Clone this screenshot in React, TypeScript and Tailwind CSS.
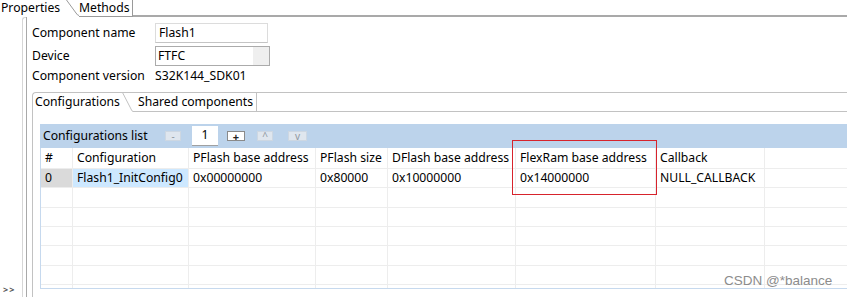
import React from "react";

const columns = [
  { width: "w-[32px]", head: "#", value: "0", cell: "bg-[#dadada]" },
  { width: "w-[116px]", head: "Configuration", value: "Flash1_InitConfig0", cell: "bg-[#cde8ff]" },
  { width: "w-[127px]", head: "PFlash base address", value: "0x00000000", cell: "" },
  { width: "w-[72px]", head: "PFlash size", value: "0x80000", cell: "" },
  { width: "w-[128px]", head: "DFlash base address", value: "0x10000000", cell: "" },
  { width: "w-[140px]", head: "FlexRam base address", value: "0x14000000", cell: "" },
  { width: "w-[109px]", head: "Callback", value: "NULL_CALLBACK", cell: "" }
];

// heights of the empty rows below the data row
const emptyRows = ["h-[20px]", "h-[19px]", "h-[19px]", "h-[20px]", "h-[19px]"];

function TopTabs() {
  return (
    <div className="flex h-[17px] leading-[15px]">
      <div className="w-[66px] whitespace-nowrap pl-[1px]">Properties</div>
      <svg width="13" height="17" className="shrink-0">
        <path d="M0.5 0 L10 13 Q11.5 15.5 13 15.5" fill="none" stroke="#9a9a9a" strokeWidth="1" />
      </svg>
      <div className="w-[54px] whitespace-nowrap border-r border-b border-[#9a9a9a]">Methods</div>
      <div className="flex-1 border-b-2 border-[#a9a9a9]" />
    </div>
  );
}

function SubTabs() {
  return (
    <div className="flex h-[20px]">
      <div className="flex w-[90px] items-center rounded-tl-[4px] border-l border-t border-[#c2c2c2] pl-[2px]">
        Configurations
      </div>
      <svg width="11" height="20" className="shrink-0">
        <path d="M0 0.5 H11 M0.5 0.5 L9 17 Q10 19.5 11 19.5" fill="none" stroke="#c2c2c2" strokeWidth="1" />
      </svg>
      <div className="flex w-[124px] items-center border-t border-r border-b border-[#c2c2c2] pl-[5px]">
        Shared components
      </div>
      <div className="flex-1 border-t border-b border-[#c2c2c2]" />
    </div>
  );
}

function BarButton({ label, enabled }: { label: string; enabled?: boolean }) {
  return (
    <div
      className={
        enabled
          ? "flex h-[10px] w-[18px] items-center justify-center border border-[#8a8a8a] bg-white text-[11px] font-bold text-[#222]"
          : "flex h-[10px] w-[16px] items-center justify-center border border-[#cdd7e2] bg-[#dfe6ee] text-[10px] text-[#8f98a2]"
      }
    >
      {label}
    </div>
  );
}

function ConfigTable() {
  return (
    <div className="flex flex-col">
      <div className="flex h-[24px] items-center bg-[#bcd3eb]">
        <div className="w-[125px] pl-[3px]">Configurations list</div>
        <BarButton label="-" />
        <div className="ml-[11px] flex h-[20px] w-[26px] items-center justify-center border-b border-[#a0a0a0] bg-white">
          1
        </div>
        <div className="ml-[9px]">
          <BarButton label="+" enabled />
        </div>
        <div className="ml-[12px]">
          <BarButton label="^" />
        </div>
        <div className="ml-[15px] w-[19px]">
          <div className="flex h-[10px] w-[19px] items-center justify-center border border-[#cdd7e2] bg-[#dfe6ee] text-[10px] text-[#8f98a2]">
            v
          </div>
        </div>
      </div>
      <div className="flex flex-col border-l border-b border-[#c6d9ee]">
        <div className="flex h-[21px] border-b border-[#ededed]">
          {columns.map((col) => (
            <div key={col.head} className={`${col.width} flex shrink-0 items-center border-r border-[#ededed] pl-[4px]`}>
              {col.head}
            </div>
          ))}
          <div className="flex-1" />
        </div>
        <div className="flex h-[19px] border-b border-[#ededed]">
          {columns.map((col) => (
            <div
              key={col.head}
              className={`${col.width} ${col.cell} flex shrink-0 items-center border-r border-[#ededed] pl-[4px]`}
            >
              {col.value}
            </div>
          ))}
          <div className="flex-1" />
        </div>
        {emptyRows.map((height, index) => (
          <div key={index} className={`${height} flex border-b border-[#ededed]`}>
            {columns.map((col) => (
              <div key={col.head} className={`${col.width} shrink-0 border-r border-[#ededed]`} />
            ))}
            <div className="flex-1" />
          </div>
        ))}
        <div className="flex h-[3px]">
          {columns.map((col) => (
            <div key={col.head} className={`${col.width} shrink-0 border-r border-[#ededed]`} />
          ))}
        </div>
      </div>
    </div>
  );
}

export default function App() {
  return (
    <div className="relative h-[297px] w-[847px] overflow-hidden bg-white font-['Noto_Sans',sans-serif] text-[12.2px] leading-none text-black">
      <TopTabs />
      <div className="flex h-[280px]">
        <div className="flex w-[22px] flex-col justify-end pb-[3px] pl-[3px] text-[9px] font-bold tracking-[1px] text-[#555]">
          &gt;&gt;
        </div>
        <div className="w-[4px] rounded-tl-[3px] border-l border-t border-[#d6d6d6]" />
        <div className="flex flex-1 flex-col border-l border-[#a9a9a9] pl-[5px] pt-[6px]">
          <div className="flex h-[20px] items-center">
            <div className="w-[123px]">Component name</div>
            <div className="flex h-[20px] w-[113px] items-center border border-[#dcdcdc] border-b-[#c4c4c4] pl-[3px]">
              Flash1
            </div>
          </div>
          <div className="mt-[3px] flex h-[20px] items-center">
            <div className="w-[123px]">Device</div>
            <div className="flex h-[20px] w-[115px] items-center border border-[#ababab]">
              <div className="flex-1 pl-[2px]">FTFC</div>
              <div className="h-full w-[16px] bg-[#efefef]" />
            </div>
          </div>
          <div className="flex h-[20px] items-center">
            <div className="w-[123px]">Component version</div>
            <div>S32K144_SDK01</div>
          </div>
          <div className="mt-[6px]">
            <SubTabs />
          </div>
          <div className="flex-1 border-l border-[#c2c2c2] pl-[7px] pt-[12px]">
            <ConfigTable />
          </div>
        </div>
      </div>
      <div className="pointer-events-none absolute left-[512px] top-[140px] h-[55px] w-[145px] border border-[#d7232c]" />
      <div className="absolute left-[724px] top-[274px] font-['Liberation_Sans',sans-serif] text-[13.5px] text-[#8c8c8c]">
        CSDN @*balance
      </div>
    </div>
  );
}
